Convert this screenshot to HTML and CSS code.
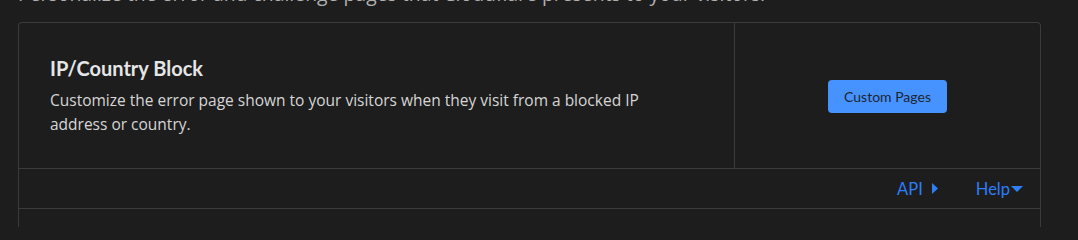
FILE: index.html
```html
<!DOCTYPE html>
<html>
<head>
<meta charset="utf-8">
<link rel="stylesheet" href="styles.css">
</head>
<body>
<p class="intro">Personalize the error and challenge pages that Cloudflare presents to your visitors.</p>
<div class="card">
  <div class="row main">
    <div class="info">
      <h3 class="title">IP/Country Block</h3>
      <p class="desc">Customize the error page shown to your visitors when they visit from a blocked IP address or country.</p>
    </div>
    <div class="action">
      <button class="btn">Custom Pages</button>
    </div>
  </div>
  <div class="row footer">
    <a class="link api">API<svg class="caret-r" width="6" height="11" viewBox="0 0 6 11"><path d="M0 0 L6 5.5 L0 11 Z" fill="currentColor"/></svg></a>
    <a class="link help">Help<svg class="caret-d" width="12" height="6" viewBox="0 0 12 6"><path d="M0 0 L12 0 L6 6 Z" fill="currentColor"/></svg></a>
  </div>
  <div class="row next"></div>
</div>
</body>
</html>
```

FILE: styles.css
```css
html, body {
  margin: 0;
  padding: 0;
  background: #1d1d1d;
  overflow: hidden;
}
body {
  font-family: "Open Sans", "Lato", sans-serif;
  color: #d8d8d8;
}
.intro {
  margin: -17px 0 17px 18px;
  font-size: 19.4px;
  line-height: 22px;
  height: 22px;
  color: #b0b0b0;
  white-space: nowrap;
}
.card {
  margin: 0 0 0 18px;
  width: 1021px;
  border: 1px solid #3b3b3b;
  border-bottom: none;
  border-radius: 4px 4px 0 0;
  height: 204px;
}
.row.main {
  display: flex;
  height: 145px;
  border-bottom: 1px solid #3b3b3b;
}
.info {
  width: 684px;
  padding: 0 0 0 31px;
  display: flex;
  flex-direction: column;
  justify-content: center;
  border-right: 1px solid #3b3b3b;
}
.title {
  margin: 0 0 8px;
  font-family: "Lato", sans-serif;
  font-size: 20px;
  line-height: 24px;
  font-weight: 700;
  color: #e6e6e6;
}
.desc {
  margin: 0;
  font-size: 15.5px;
  line-height: 24px;
  width: 640px;
  color: #d6d6d6;
}
.action {
  flex: 1;
  display: flex;
  align-items: center;
  justify-content: center;
}
.btn {
  font-family: "Lato", sans-serif;
  font-size: 14px;
  background: #4693ff;
  color: #1d2430;
  border: none;
  border-radius: 4px;
  width: 119px;
  height: 33px;
  padding: 0;
  margin-top: 1px;
}
.row.footer {
  height: 39px;
  display: flex;
  justify-content: flex-end;
  align-items: center;
  gap: 38px;
  padding-right: 17px;
  border-bottom: 1px solid #3b3b3b;
}
.link {
  color: #2d7ef7;
  font-family: "Lato", sans-serif;
  font-size: 16.5px;
  display: flex;
  align-items: center;
}
.api .caret-r { margin-left: 9px; }
.help .caret-d { margin-left: 1px; }
```
